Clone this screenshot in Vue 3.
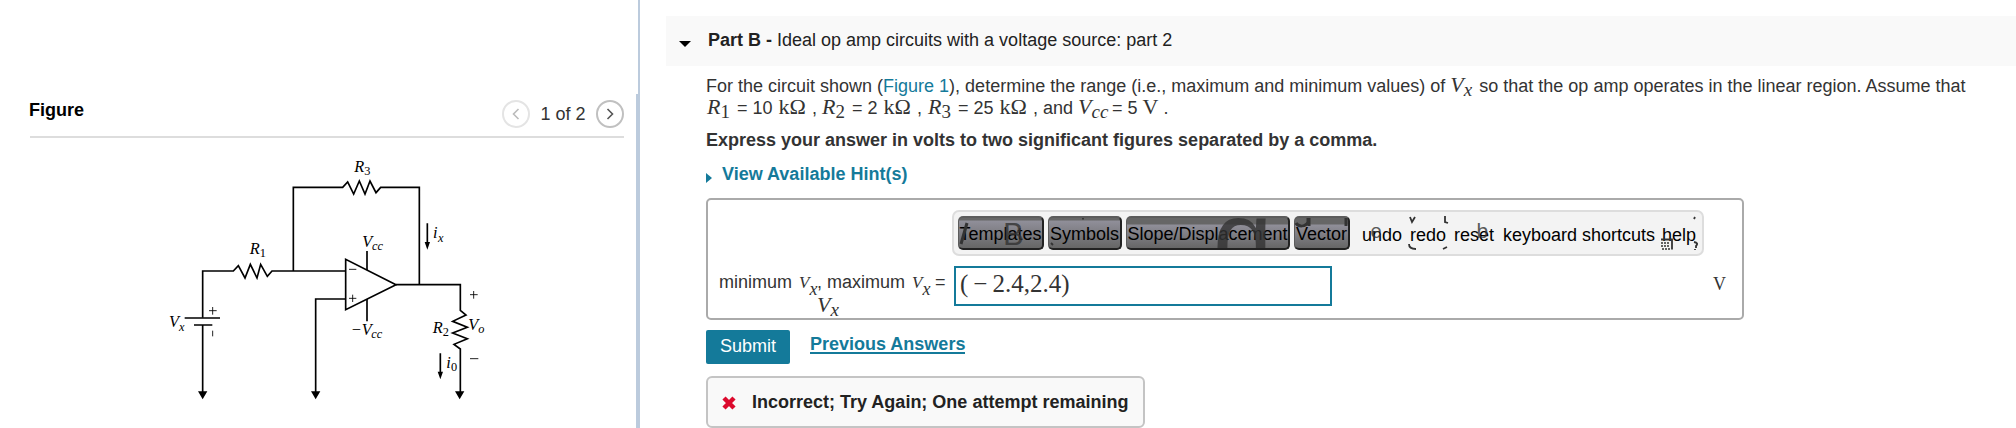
<script setup>
import { ref } from 'vue';

const answer = ref('(\u2009−\u20092.4,2.4)');

const menus = [
  { label: 'Templates', cls: 'templates' },
  { label: 'Symbols', cls: 'symbols' },
  { label: 'Slope/Displacement', cls: 'slope' },
  { label: 'Vector', cls: 'vector' },
];

const actions = [
  { label: 'undo', cls: 'undo' },
  { label: 'redo', cls: 'redo' },
  { label: 'reset', cls: 'reset' },
  { label: 'keyboard shortcuts', cls: 'keyboard' },
  { label: 'help', cls: 'help' },
];

const resistors = [
  { sub: '1', value: '10' },
  { sub: '2', value: '2' },
  { sub: '3', value: '25' },
];
</script>

<template>
  <div class="page">
    <aside class="figure-pane">
      <div class="figure-header">
        <h2>Figure</h2>
        <div class="pager">
          <button class="round disabled" type="button">
            <svg width="8" height="12" viewBox="0 0 8 12"><path d="M6.5 1l-5 5 5 5" /></svg>
          </button>
          <span class="count">1 of 2</span>
          <button class="round" type="button">
            <svg width="8" height="12" viewBox="0 0 8 12"><path d="M1.5 1l5 5-5 5" /></svg>
          </button>
        </div>
      </div>

      <svg class="circuit" width="350" height="260" viewBox="0 0 1050 780">
        <g class="wire">
          <path d="M158 503V363H250l15-16 20 37 16-41 20 41 11-41 20 36 14-16H587" />
          <path d="M430 363V112H578l15-16 18 36 17-39 17 39 15-39 18 35 14-16H808V404" />
          <path d="M738 404H931V481l17 14-40 19 44 18-44 17 44 17-40 17 19 14V730" />
          <path d="M587 447H497V730M158 525V730" />
          <path d="M587 328V479L738 404Z" />
          <path d="M651 303V360M651 447V514" />
          <path d="M104 504H210M132 525H187" />
          <path d="M832 220V280M871 610V670" />
        </g>
        <g class="thin">
          <path d="M177 482h23M188 471v23M188 542v17" />
          <path d="M597 358h22M597 445h22M608 434v22" />
          <path d="M960 434h23M971 423v23M960 626h25" />
        </g>
        <g class="tip">
          <path d="M144 724h28l-14 24zM483 724h28l-14 24zM915 724h28l-14 24z" />
          <path d="M824 276h16l-8 23zM863 665h16l-8 23z" />
        </g>
        <g class="labels">
          <text x="613" y="67">R<tspan class="sub num" dy="9">3</tspan></text>
          <text x="299" y="312">R<tspan class="sub num" dy="10">1</tspan></text>
          <text x="848" y="549">R<tspan class="sub num" dy="10">2</tspan></text>
          <text x="637" y="290">V<tspan class="sub" dy="9" dx="-1">cc</tspan></text>
          <text x="602" y="556">−V<tspan class="sub" dy="9" dx="-1">cc</tspan></text>
          <text x="57" y="532">V<tspan class="sub" dy="11">x</tspan></text>
          <text x="955" y="540">V<tspan class="sub" dy="10">o</tspan></text>
          <text x="849" y="264">i<tspan class="sub" dy="11" dx="1">x</tspan></text>
          <text x="889" y="654">i<tspan class="sub num" dy="9">0</tspan></text>
        </g>
      </svg>
    </aside>

    <div class="divider"></div>

    <main class="problem">
      <header class="part-header">
        <svg width="12" height="6" viewBox="0 0 12 6"><path d="M0 0h12L6 6z" /></svg>
        <p><b>Part B -</b> Ideal op amp circuits with a voltage source: part 2</p>
      </header>

      <section class="content">
        <p class="line intro">
          For the circuit shown (<a>Figure 1</a>), determine the range (i.e., maximum and minimum values) of
          <span class="math vx">V<sub>x</sub></span> so that the op amp operates in the linear region. Assume that
        </p>
        <div class="line values">
          <span v-for="r in resistors" :key="r.sub" class="term">
            <span class="math r">R<sub class="num">{{ r.sub }}</sub></span>
            <span>= {{ r.value }}</span>
            <span class="math unit">kΩ</span>
            <span>,</span>
          </span>
          <span class="term last">
            <span>and</span>
            <span class="math vcc">V<sub>cc</sub></span>
            <span>= 5</span>
            <span class="math volt">V</span>
            <span>.</span>
          </span>
        </div>
        <p class="line instructions">Express your answer in volts to two significant figures separated by a comma.</p>
        <a class="hints">
          <svg width="6" height="10" viewBox="0 0 6 10"><path d="M0 0l6 5-6 5z" /></svg>
          <span>View Available Hint(s)</span>
        </a>

        <div class="answer-box">
          <div class="toolbar">
            <button v-for="m in menus" :key="m.label" class="menu" :class="m.cls" type="button">
              {{ m.label }}
            </button>
            <span v-for="a in actions" :key="a.label" class="action" :class="a.cls">{{ a.label }}</span>

            <!-- icon font glyphs that sit over the labels -->
            <svg class="glyphs" width="752" height="46" viewBox="952 210 752 46">
              <clipPath id="slope-clip"><rect x="1126" y="218" width="162" height="30" /></clipPath>
              <text x="1003" y="245" font-size="31">B</text>
              <text x="1213" y="276" font-size="107" clip-path="url(#slope-clip)">q</text>
              <text x="1370.5" y="238" font-size="20">e</text>
              <text x="1476.5" y="238" font-size="21">b</text>
              <path class="slash" d="M967 223L961 244" />
              <path d="M1296 223c2 4 10 4 12-1v-4M1309 218v8M1346 218v8" />
              <path class="fine" d="M1410 217l2 5 3-5M1445 216v6l3 1M1409 244c0 4 4 5 7 5M1443 249l4-2" />
              <path class="fine" d="M1083 218v1.5M1051 243l2 2M1695 217l-1 2M1661 239.5h11v10M1694 242q5 1 2 4v2M1695 249v1" />
              <path class="keys" d="M1661 243h9M1661 246h9M1662 249h8" />
            </svg>
          </div>

          <div class="answer-row">
            <div class="answer-label">
              <div class="label-main">
                minimum <span class="math lv">V<sub>x</sub></span>, maximum <span class="math lv">V<sub>x</sub></span> =
              </div>
              <div class="math label-under">V<sub>x</sub></div>
            </div>
            <div class="answer-input">{{ answer }}</div>
            <span class="answer-unit">V</span>
          </div>
        </div>

        <div class="buttons">
          <button class="submit" type="button">Submit</button>
          <a class="previous">Previous Answers</a>
        </div>

        <div class="feedback">
          <svg width="14" height="14" viewBox="0 0 14 14"><path d="M2 2l10 10M12 2L2 12" /></svg>
          <span>Incorrect; Try Again; One attempt remaining</span>
        </div>
      </section>
    </main>
  </div>
</template>

<style>
body {
  margin: 0;
  background: #ffffff;
}
</style>

<style scoped>
.page {
  display: flex;
  width: 2016px;
  height: 428px;
  overflow: hidden;
  font-family: "Liberation Sans", Arial, sans-serif;
  font-size: 18px;
  line-height: 22px;
  color: #333333;
  background: #ffffff;
}

p,
h2 {
  margin: 0;
}

button {
  font-family: inherit;
  font-size: 18px;
  padding: 0;
}

/* FIGURE */
.figure-pane {
  width: 636px;
  flex: none;
}

.figure-header {
  display: flex;
  justify-content: space-between;
  margin: 100px 12px 0 30px;
  height: 36px;
  border-bottom: 2px solid #dddddd;
}

.figure-header h2 {
  font-size: 18px;
  line-height: 20px;
  margin-left: -1px;
  color: #000000;
}

.pager {
  display: flex;
  height: 28px;
  align-items: center;
}

.round {
  width: 28px;
  height: 28px;
  box-sizing: border-box;
  border: 2px solid #c0c0c0;
  border-radius: 50%;
  background: #ffffff;
  display: flex;
  align-items: center;
  justify-content: center;
}

.round path {
  fill: none;
  stroke: #555555;
  stroke-width: 1.6;
}

.round.disabled {
  border-color: #e4e4e4;
}

.round.disabled path {
  stroke: #bbbbbb;
}

.count {
  width: 66px;
  text-align: center;
}

.circuit {
  display: block;
  margin: 12px 0 0 150px;
}

.wire path {
  fill: none;
  stroke: #000000;
  stroke-width: 5;
}

.thin path {
  fill: none;
  stroke: #000000;
  stroke-width: 2.6;
}

.labels text {
  font-family: "Liberation Serif", serif;
  font-style: italic;
  font-size: 49px;
}

.labels .sub {
  font-size: 37px;
}

.labels .num {
  font-style: normal;
}

.divider {
  width: 4px;
  flex: none;
  background: linear-gradient(#ffffff, #ffffff) 0 0 / 2px 94px no-repeat #bccbdd;
}

/* PROBLEM */
.problem {
  flex: 1;
  padding: 16px 0 0 26px;
}

.part-header {
  height: 50px;
  background: #f9f9f9;
  display: flex;
  align-items: center;
  padding-left: 13px;
  color: #222222;
}

.part-header svg {
  margin: 6px 17px 0 0;
}

.part-header p {
  margin-top: -2px;
}

.content {
  padding: 9px 0 0 40px;
}

.line {
  white-space: nowrap;
}

.intro {
  height: 22px;
  line-height: 22px;
}

a {
  color: #147a9a;
}

.math {
  font-family: "Liberation Serif", serif;
  font-style: italic;
  font-size: 22px;
  line-height: 0;
  display: inline-block;
}

.math sub {
  font-size: 19px;
  line-height: 0;
  vertical-align: -4px;
}

.math .num {
  font-style: normal;
}

.vx {
  width: 24px;
}

.values {
  display: grid;
  grid-template-columns: 115px 106px 114px auto;
  height: 22px;
}

.term {
  display: flex;
  align-items: baseline;
  gap: 6px;
  padding-left: 1px;
}

.term .r {
  width: 24px;
}

.term .vcc {
  width: 29px;
}

.math.unit,
.math.volt {
  font-style: normal;
}

.last {
  gap: 5px;
  padding-left: 2px;
}

.instructions {
  margin-top: 10px;
  font-weight: bold;
}

.hints {
  display: flex;
  align-items: center;
  gap: 10px;
  height: 22px;
  margin-top: 12px;
  font-weight: bold;
}

.hints svg {
  fill: #147a9a;
  margin-top: 7px;
}

.answer-box {
  box-sizing: border-box;
  width: 1038px;
  height: 122px;
  margin-top: 13px;
  border: 2px solid #aaaaaa;
  border-radius: 5px;
  padding: 10px 0 0 11px;
}

.toolbar {
  position: relative;
  display: flex;
  align-items: center;
  box-sizing: border-box;
  width: 752px;
  height: 46px;
  margin-left: 233px;
  padding-left: 4px;
  border: 2px solid #dddddd;
  border-radius: 7px;
  background: #f3f3f3;
  color: #000000;
}

.menu {
  box-sizing: border-box;
  height: 34px;
  margin-right: 4px;
  padding-top: 3px;
  border: 1px solid #555555;
  border-width: 2px 2px 2px 1px;
  border-color: #5c5c5c #222222 #222222 #5c5c5c;
  border-radius: 5px;
  background: linear-gradient(#666666 0 2px, #908f99 3px, #666666);
  color: #000000;
  white-space: nowrap;
}

.templates {
  width: 86px;
}

.symbols {
  width: 74px;
}

.slope {
  width: 164px;
  background: linear-gradient(#666666 0 6px, #908f99 7px, #666666);
}

.vector {
  width: 56px;
  background: linear-gradient(#666666 0 6px, #908f99 7px, #666666);
}

.action {
  padding-top: 3px;
  white-space: nowrap;
}

.undo {
  width: 48px;
  margin-left: 8px;
}

.redo {
  width: 44px;
}

.reset {
  width: 49px;
}

.keyboard {
  width: 159px;
}

.glyphs {
  position: absolute;
  left: -2px;
  top: -2px;
}

.glyphs text {
  fill: #333333;
  opacity: 0.8;
}

.glyphs path {
  fill: none;
  stroke: #333333;
  stroke-width: 3;
}

.glyphs .fine {
  stroke-width: 1.8;
}

.glyphs .keys {
  stroke-width: 1.5;
  stroke-dasharray: 2 1;
}

.answer-row {
  display: flex;
  padding-top: 10px;
}

.answer-label {
  width: 235px;
  padding-top: 5px;
  white-space: nowrap;
}

.label-main {
  height: 22px;
}

.lv {
  width: 18px;
  padding-left: 2px;
  font-size: 17px;
}

.lv sub {
  font-size: 18px;
  vertical-align: -7px;
}

.label-under {
  display: block;
  line-height: 23px;
  margin-left: 98px;
}

.answer-input {
  box-sizing: border-box;
  width: 378px;
  height: 40px;
  border: 2px solid #147a9a;
  padding-left: 4px;
  font-family: "Liberation Serif", serif;
  font-size: 25px;
  line-height: 32px;
}

.answer-unit {
  margin: 7px 0 0 381px;
  font-family: "Liberation Serif", serif;
  font-size: 18px;
}

.buttons {
  display: flex;
  margin-top: 10px;
}

.submit {
  width: 84px;
  height: 34px;
  padding-bottom: 2px;
  border: none;
  border-radius: 2px;
  background: #147a9a;
  color: #ffffff;
}

.previous {
  height: 22px;
  line-height: 28px;
  margin-left: 20px;
  border-bottom: 2px solid #147a9a;
  font-weight: bold;
}

.feedback {
  display: flex;
  align-items: center;
  box-sizing: border-box;
  width: 439px;
  height: 52px;
  margin-top: 12px;
  padding-left: 14px;
  border: 2px solid #c4c4c4;
  border-radius: 6px;
  background: #f9f9f9;
  color: #222222;
  font-weight: bold;
}

.feedback svg {
  margin: 2px 16px 0 0;
}

.feedback path {
  stroke: #dc0a2d;
  stroke-width: 4.5;
}
</style>
